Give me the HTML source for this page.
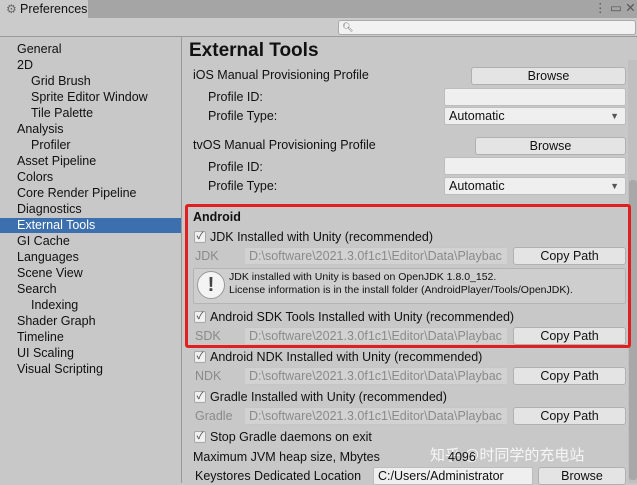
<!DOCTYPE html><html><head><style>
body{margin:0;width:637px;height:483px;overflow:hidden;background:#c8c8c8;position:relative;font-family:"Liberation Sans","Noto Sans CJK SC",sans-serif;font-size:12.5px;color:#101010}
div{position:absolute;box-sizing:border-box}
.t{line-height:16px;white-space:nowrap}
.btn{background:#e4e4e4;border:1px solid #b0b0b0;border-radius:3px;text-align:center;line-height:16px;height:18px}
.fld{background:#efefef;border:1px solid #bdbdbd;border-radius:2px;height:18px;line-height:16px;padding-left:4px;white-space:nowrap;overflow:hidden}
.dis{background:#d2d2d2;border:1px solid #c6c6c6;color:#8a8a8a}
.cb{width:12px;height:12px;background:#f0f0f0;border:1px solid #a8a8a8;border-radius:2px;font-size:10px;line-height:10px;text-align:center;color:#333}
.g{color:#8a8a8a}
</style></head><body>
<div style="left:0;top:0;width:637px;height:18px;background:#a5a5a5"></div>
<div style="left:0;top:0;width:88px;height:18px;background:#cbcbcb"></div>
<div class="t" style="left:6px;top:1px;color:#666;font-size:12px">⚙</div>
<div class="t" style="left:20px;top:1px;font-size:12.5px">Preferences</div>
<div class="t" style="left:594px;top:0;color:#555">⋮ ▭ ✕</div>
<div style="left:0;top:18px;width:637px;height:19px;background:#cbcbcb;border-bottom:1px solid #999"></div>
<div style="left:338px;top:20px;width:298px;height:15px;background:#f2f2f2;border:1px solid #aaa;border-radius:3px"></div>
<div class="t" style="left:342px;top:19px;font-size:9px;color:#666">🔍︎</div>
<div style="left:181px;top:37px;width:1px;height:446px;background:#999"></div>
<div style="left:0;top:218px;width:181px;height:15px;background:#3c6fae"></div>
<div class="t" style="left:17px;top:41px">General</div>
<div class="t" style="left:17px;top:57px">2D</div>
<div class="t" style="left:31px;top:73px">Grid Brush</div>
<div class="t" style="left:31px;top:89px">Sprite Editor Window</div>
<div class="t" style="left:31px;top:105px">Tile Palette</div>
<div class="t" style="left:17px;top:121px">Analysis</div>
<div class="t" style="left:31px;top:137px">Profiler</div>
<div class="t" style="left:17px;top:153px">Asset Pipeline</div>
<div class="t" style="left:17px;top:169px">Colors</div>
<div class="t" style="left:17px;top:185px">Core Render Pipeline</div>
<div class="t" style="left:17px;top:201px">Diagnostics</div>
<div class="t" style="left:17px;top:217px;color:#fff">External Tools</div>
<div class="t" style="left:17px;top:233px">GI Cache</div>
<div class="t" style="left:17px;top:249px">Languages</div>
<div class="t" style="left:17px;top:265px">Scene View</div>
<div class="t" style="left:17px;top:281px">Search</div>
<div class="t" style="left:31px;top:297px">Indexing</div>
<div class="t" style="left:17px;top:313px">Shader Graph</div>
<div class="t" style="left:17px;top:329px">Timeline</div>
<div class="t" style="left:17px;top:345px">UI Scaling</div>
<div class="t" style="left:17px;top:361px">Visual Scripting</div>
<div style="left:628px;top:60px;width:9px;height:423px;background:#c0c0c0"></div>
<div style="left:629px;top:180px;width:8px;height:300px;background:#a8a8a8;border-radius:3px"></div>
<div class="t" style="left:189px;top:40px;font-size:19px;line-height:22px;font-weight:bold;color:#111">External Tools</div>
<div class="t" style="left:193px;top:67px">iOS Manual Provisioning Profile</div>
<div class="btn" style="left:471px;top:67px;width:155px">Browse</div>
<div class="t" style="left:208px;top:89px">Profile ID:</div>
<div class="fld" style="left:444px;top:88px;width:182px"></div>
<div class="t" style="left:208px;top:108px">Profile Type:</div>
<div class="fld" style="left:444px;top:107px;width:182px">Automatic<span style="position:absolute;right:6px;font-size:9px;color:#555">▼</span></div>
<div class="t" style="left:193px;top:137px">tvOS Manual Provisioning Profile</div>
<div class="btn" style="left:475px;top:137px;width:151px">Browse</div>
<div class="t" style="left:208px;top:159px">Profile ID:</div>
<div class="fld" style="left:444px;top:157px;width:182px"></div>
<div class="t" style="left:208px;top:178px">Profile Type:</div>
<div class="fld" style="left:444px;top:177px;width:182px">Automatic<span style="position:absolute;right:6px;font-size:9px;color:#555">▼</span></div>
<div style="left:185px;top:204px;width:446px;height:144px;border:3px solid #e02020;border-radius:3px"></div>
<div class="t" style="left:193px;top:209px;font-weight:bold">Android</div>
<div class="cb" style="left:194px;top:231px">✓</div><div class="t" style="left:210px;top:229px">JDK Installed with Unity (recommended)</div>
<div class="t g" style="left:195px;top:248px">JDK</div>
<div class="fld dis" style="left:244px;top:247px;width:264px">D:\software\2021.3.0f1c1\Editor\Data\Playbac</div>
<div class="btn" style="left:513px;top:247px;width:113px">Copy Path</div>
<div style="left:193px;top:268px;width:433px;height:36px;border:1px solid #b4b4b4;background:#cecece;border-radius:2px"></div>
<div style="left:197px;top:271px;width:28px;height:28px;border-radius:50%;background:#f4f4f4;border:1px solid #999;text-align:center;font-weight:bold;font-size:20px;line-height:26px;color:#444">!</div>
<div class="t" style="left:229px;top:271px;font-size:10.5px;line-height:13px">JDK installed with Unity is based on OpenJDK 1.8.0_152.<br>License information is in the install folder (AndroidPlayer/Tools/OpenJDK).</div>
<div class="cb" style="left:194px;top:311px">✓</div><div class="t" style="left:210px;top:309px">Android SDK Tools Installed with Unity (recommended)</div>
<div class="t g" style="left:195px;top:328px">SDK</div>
<div class="fld dis" style="left:244px;top:327px;width:264px">D:\software\2021.3.0f1c1\Editor\Data\Playbac</div>
<div class="btn" style="left:513px;top:327px;width:113px">Copy Path</div>
<div class="cb" style="left:194px;top:351px">✓</div><div class="t" style="left:210px;top:349px">Android NDK Installed with Unity (recommended)</div>
<div class="t g" style="left:195px;top:368px">NDK</div>
<div class="fld dis" style="left:244px;top:367px;width:264px">D:\software\2021.3.0f1c1\Editor\Data\Playbac</div>
<div class="btn" style="left:513px;top:367px;width:113px">Copy Path</div>
<div class="cb" style="left:194px;top:391px">✓</div><div class="t" style="left:210px;top:389px">Gradle Installed with Unity (recommended)</div>
<div class="t g" style="left:195px;top:408px">Gradle</div>
<div class="fld dis" style="left:244px;top:407px;width:264px">D:\software\2021.3.0f1c1\Editor\Data\Playbac</div>
<div class="btn" style="left:513px;top:407px;width:113px">Copy Path</div>
<div class="cb" style="left:194px;top:431px">✓</div><div class="t" style="left:210px;top:429px">Stop Gradle daemons on exit</div>
<div class="t" style="left:193px;top:449px">Maximum JVM heap size, Mbytes</div>
<div class="t" style="left:430px;top:448px;font-size:15px;color:#fff;opacity:.85">知乎 @时同学的充电站</div>
<div class="t" style="left:448px;top:449px">4096</div>
<div class="t" style="left:195px;top:468px">Keystores Dedicated Location</div>
<div class="fld" style="left:373px;top:467px;width:160px">C:/Users/Administrator</div>
<div class="btn" style="left:538px;top:467px;width:88px">Browse</div>
</body></html>
